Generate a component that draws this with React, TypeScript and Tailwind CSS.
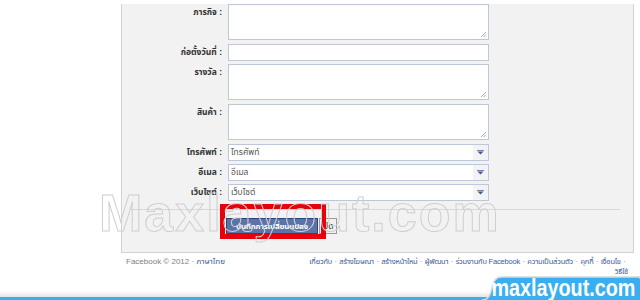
import React from 'react'

type Row = {
  label: string
  kind: 'area' | 'input' | 'select'
  mt: string
  placeholder?: string
}

const rows: Row[] = [
  { label: 'ภารกิจ :', kind: 'area', mt: 'mt-[4px]' },
  { label: 'ก่อตั้งวันที่ :', kind: 'input', mt: 'mt-[4px]' },
  { label: 'รางวัล :', kind: 'area', mt: 'mt-[3px]' },
  { label: 'สินค้า :', kind: 'area', mt: 'mt-[4px]' },
  { label: 'โทรศัพท์ :', kind: 'select', mt: 'mt-[4px]', placeholder: 'โทรศัพท์' },
  { label: 'อีเมล :', kind: 'select', mt: 'mt-[3px]', placeholder: 'อีเมล' },
  { label: 'เว็บไซต์ :', kind: 'select', mt: 'mt-[3px]', placeholder: 'เว็บไซต์' },
]

const links = [
  'เกี่ยวกับ',
  'สร้างโฆษณา',
  'สร้างหน้าใหม่',
  'ผู้พัฒนา',
  'ร่วมงานกับ Facebook',
  'ความเป็นส่วนตัว',
  'คุกกี้',
  'เงื่อนไข',
]

const Grip = () => (
  <svg width="7" height="7" viewBox="0 0 7 7" className="absolute right-[1px] bottom-[1px]">
    <path d="M6 1 L1 6 M6 3.5 L3.5 6 M6 5.5 L5.5 6" stroke="#999" strokeWidth="0.8" />
  </svg>
)

const Field = ({ row }: { row: Row }) => {
  if (row.kind === 'area') {
    return (
      <div className="relative w-[261px] h-[36px] bg-white border border-[#bdc7d8]">
        <Grip />
      </div>
    )
  }
  if (row.kind === 'input') {
    return <div className="w-[261px] h-[17px] bg-white border border-[#bdc7d8]" />
  }
  return (
    <div className="flex w-[261px] h-[17px] bg-white border border-[#bdc7d8]">
      <div className="flex-1 pl-[2px] text-[8.5px] leading-[15px] text-[#555]">{row.placeholder}</div>
      <div className="w-[15px] h-full bg-[#f3f3f3] flex items-center justify-center">
        <svg width="7" height="5" viewBox="0 0 7 5">
          <rect x="0" y="0" width="7" height="1" fill="#6d84b4" />
          <path d="M0.5 1.5 L6.5 1.5 L3.5 4.5 Z" fill="#3b5998" />
        </svg>
      </div>
    </div>
  )
}

export default function App() {
  return (
    <div className="relative w-[640px] h-[300px] overflow-hidden bg-white font-['Liberation_Sans','Noto_Sans_Thai_UI',sans-serif]">
      <div className="ml-[121px] w-[513px] h-[249px] bg-[#f2f2f2] border-x border-b border-[#d2d2d2]">
        {rows.map((row, i) => (
          <div key={i} className={`flex ${row.mt} ${row.kind === 'area' ? 'items-start' : 'items-center'}`}>
            <div
              className={`w-[101px] pr-[1px] text-right text-[8.5px] font-bold text-[#333] ${
                row.kind === 'area' ? 'pt-[2px]' : ''
              }`}
            >
              {row.label}
            </div>
            <div className="ml-[5px]">
              <Field row={row} />
            </div>
          </div>
        ))}
        <div className="ml-[9px] mr-[13px] mt-[8px] border-t border-[#d8d8d8]" />
        <div className="flex ml-[104px] mt-[8px] gap-[1px]">
          <button className="h-[16px] w-[92px] px-0 bg-[#5b74a8] border border-[#29447e] text-white text-[8px] font-bold leading-[13px] tracking-[-0.2px] whitespace-nowrap overflow-hidden">
            บันทึกการเปลี่ยนแปลง
          </button>
          <button className="h-[16px] px-[3px] bg-[#f0f0f0] border border-[#999] text-[#333] text-[8.5px] leading-[13px]">
            ปิด
          </button>
        </div>
      </div>

      <div className="flex ml-[126px] mr-[12px] mt-[4px] text-[8px] leading-[10px]">
        <div className="w-[181px] shrink-0 text-[#808080] whitespace-nowrap">
          Facebook © 2012 · <span className="text-[#3b5998]">ภาษาไทย</span>
        </div>
        <div className="flex-1 min-w-0 flex flex-col items-end text-[#3b5998] text-[7.5px] tracking-[-0.2px]">
          <div className="flex whitespace-nowrap">
            {links.map((l) => (
              <span key={l} className="flex">
                {l}
                <span className="text-[#808080] mx-[2.5px]">·</span>
              </span>
            ))}
          </div>
          <div>วิธีใช้</div>
        </div>
      </div>

      {/* red highlight */}
      <div className="absolute left-[220px] top-[204px] w-[106px] h-[35px] border-[5px] border-[#e8000b]" />

      {/* watermark */}
      <div className="absolute left-[99px] top-[187px] text-[52px] font-bold tracking-[2px] leading-none text-transparent [-webkit-text-stroke:1px_#cfcfcf] pointer-events-none">
        Maxlayout.com
      </div>

      {/* bottom brand bar */}
      <div className="absolute left-0 right-0 bottom-[3px] h-[6px] bg-gradient-to-b from-transparent to-[#e4e4e4]" />
      <div className="absolute left-0 right-0 bottom-0 h-[3px] bg-[#39aef0]" />
      <svg className="absolute right-0 bottom-0" width="158" height="24" viewBox="0 0 158 24">
        <path d="M0 24 C6 24 8 20 10 12 C12 4 14 1 20 1 L158 1 L158 24 Z" fill="#39aef0" stroke="#d8d8d8" strokeWidth="1.5" />
        <path d="M3 24 C8 23 10 19 12 12 C14 5 16 3 21 3 L158 3 L158 24 Z" fill="#39aef0" />
      </svg>
      <div className="absolute right-[5px] bottom-[1px] origin-right scale-x-[0.86] text-[23px] font-bold leading-[22px] text-white whitespace-nowrap">
        maxlayout.com
      </div>
    </div>
  )
}
